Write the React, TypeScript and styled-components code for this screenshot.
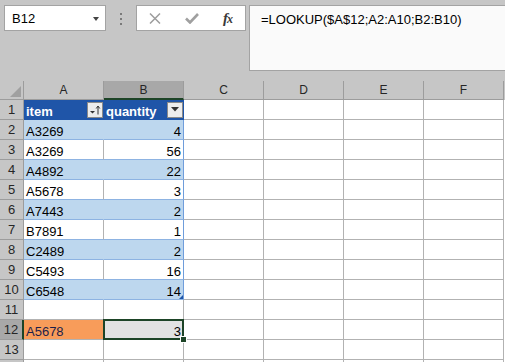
import React from 'react';
import styled, { createGlobalStyle, css } from 'styled-components';

const COLORS = {
  chrome: '#c6c6c6',
  frame: '#a3a3a3',
  headerLine: '#9c9c9c',
  headerText: '#262626',
  grid: '#b2b2b2',
  tableHead: '#1f55a8',
  tableBand: '#bdd7ee',
  tableLine: '#8db3e2',
  tableEdge: '#6f9ddb',
  selection: '#1d4427',
  selectedHeader: '#a8a8a8',
  orange: '#f89c5a',
};

const GlobalStyle = createGlobalStyle`
  html, body {
    margin: 0;
    overflow: hidden;
    background: #fff;
    font-family: "Liberation Sans", Arial, sans-serif;
    color: #000;
  }
`;

const Toolbar = styled.div`
  display: flex;
  align-items: flex-start;
  height: 81px;
  box-sizing: border-box;
  padding: 5px 0 0 4px;
  background: ${COLORS.chrome};
`;

const NameBox = styled.div`
  display: flex;
  align-items: center;
  justify-content: space-between;
  width: 102px;
  height: 26px;
  box-sizing: border-box;
  padding: 1px 6px 0 7px;
  border: 1px solid ${COLORS.frame};
  background: #fff;
  font-size: 13px;
`;

const DropArrow = styled.span`
  width: 0;
  height: 0;
  border-left: 3.5px solid transparent;
  border-right: 3.5px solid transparent;
  border-top: 4px solid #444;
`;

const Grip = styled.div`
  display: flex;
  flex-direction: column;
  gap: 3px;
  margin: 8px 14px 0;
  > i {
    width: 2px;
    height: 2px;
    background: #7a7a7a;
  }
`;

const FxBox = styled.div`
  display: flex;
  align-items: center;
  gap: 24px;
  width: 110px;
  height: 26px;
  box-sizing: border-box;
  padding: 0 0 0 12px;
  border: 1px solid ${COLORS.frame};
  background: #fff;
`;

const FxLabel = styled.span`
  font-family: "Liberation Serif", "DejaVu Serif", serif;
  font-style: italic;
  font-weight: bold;
  font-size: 15px;
  color: #3a3a3a;
  letter-spacing: -1px;
  > small {
    font-size: 12px;
  }
`;

const FormulaBar = styled.div`
  flex: 1;
  height: 66px;
  margin-left: 3px;
  box-sizing: border-box;
  padding: 6px 0 0 11px;
  border: 1px solid ${COLORS.frame};
  border-right: none;
  background: #fafafa;
  font-size: 13px;
  line-height: 15px;
`;

const Sheet = styled.div`
  display: grid;
  grid-template-columns: 24px repeat(6, 80px) 1fr;
  grid-template-rows: 19px;
  grid-auto-rows: 20px;
  font-size: 13px;
`;

const ColHeader = styled.div<{ $selected?: boolean }>`
  display: flex;
  align-items: center;
  justify-content: center;
  box-sizing: border-box;
  background: ${COLORS.chrome};
  border-right: 1px solid ${COLORS.headerLine};
  border-bottom: 1px solid ${COLORS.headerLine};
  color: ${COLORS.headerText};
  font-size: 12px;
  ${(p) =>
    p.$selected &&
    css`
      background: ${COLORS.selectedHeader};
      border-bottom: 2px solid ${COLORS.selection};
    `}
`;

const Corner = styled(ColHeader)`
  align-items: flex-end;
  justify-content: flex-end;
  padding: 0 2px 2px 0;
  &::after {
    content: '';
    width: 0;
    height: 0;
    border-left: 11px solid transparent;
    border-bottom: 11px solid #a0a0a0;
  }
`;

const Filler = styled.div<{ $chrome?: boolean }>`
  background: ${(p) => (p.$chrome ? COLORS.chrome : '#fff')};
`;

const RowHeader = styled.div<{ $selected?: boolean }>`
  display: flex;
  align-items: center;
  justify-content: center;
  box-sizing: border-box;
  background: ${COLORS.chrome};
  border-right: 1px solid ${COLORS.headerLine};
  border-bottom: 1px solid ${COLORS.headerLine};
  color: ${COLORS.headerText};
  ${(p) =>
    p.$selected &&
    css`
      background: ${COLORS.selectedHeader};
      border-right: 2px solid ${COLORS.selection};
    `}
`;

const Cell = styled.div<{
  $fill?: string;
  $vline?: string;
  $hline?: string;
  $right?: boolean;
  $bold?: boolean;
  $color?: string;
  $active?: boolean;
}>`
  position: relative;
  display: flex;
  align-items: flex-end;
  justify-content: ${(p) => (p.$right ? 'flex-end' : 'flex-start')};
  box-sizing: border-box;
  padding: 0 2px 0 2px;
  line-height: 14px;
  white-space: nowrap;
  background: ${(p) => p.$fill ?? '#fff'};
  border-right: 1px solid ${(p) => p.$vline ?? COLORS.grid};
  border-bottom: 1px solid ${(p) => p.$hline ?? COLORS.grid};
  color: ${(p) => p.$color ?? '#000'};
  font-weight: ${(p) => (p.$bold ? 'bold' : 'normal')};
  ${(p) =>
    p.$active &&
    css`
      z-index: 1;
      &::after {
        content: '';
        position: absolute;
        inset: -1px;
        border: 2px solid ${COLORS.selection};
      }
    `}
`;

const TableHeadCell = styled(Cell)`
  padding-right: 0;
`;

const FilterButton = styled.span`
  display: flex;
  align-items: center;
  justify-content: center;
  align-self: center;
  width: 16px;
  height: 16px;
  margin-left: auto;
  box-sizing: border-box;
  border: 1px solid #8a8a8a;
  background: #ededed;
`;

const FillHandle = styled.span`
  position: absolute;
  right: -4px;
  bottom: -4px;
  z-index: 2;
  width: 5px;
  height: 5px;
  border: 1px solid #fff;
  background: ${COLORS.selection};
`;

const ResizeMark = styled.span`
  position: absolute;
  right: 0;
  bottom: 0;
  width: 0;
  height: 0;
  border-left: 4px solid transparent;
  border-bottom: 4px solid ${COLORS.tableHead};
`;

const COLUMNS = ['A', 'B', 'C', 'D', 'E', 'F'];

const DATA: [string, number][] = [
  ['A3269', 4],
  ['A3269', 56],
  ['A4892', 22],
  ['A5678', 3],
  ['A7443', 2],
  ['B7891', 1],
  ['C2489', 2],
  ['C5493', 16],
  ['C6548', 14],
];

function SortFilterIcon() {
  return (
    <svg width="12" height="12" viewBox="0 0 12 12">
      <path d="M1 7h5l-2.5 2.5z" fill="#333" />
      <path d="M9 2.5v8" stroke="#333" strokeWidth="1" />
      <path d="M7.2 4.5L9 2l1.8 2.5" fill="none" stroke="#333" strokeWidth="1" />
    </svg>
  );
}

function FilterIcon() {
  return (
    <svg width="8" height="5" viewBox="0 0 8 5">
      <path d="M0 0h8L4 4.5z" fill="#333" />
    </svg>
  );
}

function EmptyCells() {
  return (
    <>
      {COLUMNS.slice(2).map((c) => (
        <Cell key={c} />
      ))}
      <Filler />
    </>
  );
}

export default function App() {
  const rows: React.ReactNode[] = [];

  rows.push(
    <React.Fragment key="r1">
      <RowHeader>1</RowHeader>
      <TableHeadCell $fill={COLORS.tableHead} $vline={COLORS.tableHead} $hline={COLORS.tableHead} $color="#fff" $bold>
        item
        <FilterButton>
          <SortFilterIcon />
        </FilterButton>
      </TableHeadCell>
      <TableHeadCell $fill={COLORS.tableHead} $vline={COLORS.tableHead} $hline={COLORS.tableHead} $color="#fff" $bold>
        quantity
        <FilterButton>
          <FilterIcon />
        </FilterButton>
      </TableHeadCell>
      <EmptyCells />
    </React.Fragment>
  );

  DATA.forEach(([item, qty], i) => {
    const band = i % 2 === 0;
    const fill = band ? COLORS.tableBand : '#fff';
    const last = i === DATA.length - 1;
    rows.push(
      <React.Fragment key={`r${i + 2}`}>
        <RowHeader>{i + 2}</RowHeader>
        <Cell $fill={fill} $vline={band ? COLORS.tableBand : COLORS.grid} $hline={COLORS.tableLine}>
          {item}
        </Cell>
        <Cell $fill={fill} $vline={COLORS.tableEdge} $hline={COLORS.tableLine} $right>
          {qty}
          {last && <ResizeMark />}
        </Cell>
        <EmptyCells />
      </React.Fragment>
    );
  });

  rows.push(
    <React.Fragment key="r11">
      <RowHeader>11</RowHeader>
      <Cell />
      <Cell />
      <EmptyCells />
    </React.Fragment>
  );

  rows.push(
    <React.Fragment key="r12">
      <RowHeader $selected>12</RowHeader>
      <Cell $fill={COLORS.orange} $vline={COLORS.orange} $color="#1c1f4a">
        A5678
      </Cell>
      <Cell $fill="#e2e2e2" $right $active>
        3
        <FillHandle />
      </Cell>
      <EmptyCells />
    </React.Fragment>
  );

  rows.push(
    <React.Fragment key="r13">
      <RowHeader>13</RowHeader>
      <Cell />
      <Cell />
      <EmptyCells />
    </React.Fragment>
  );

  // row 14 only peeks in by a couple of pixels, so its number stays off-screen
  rows.push(
    <React.Fragment key="r14">
      <RowHeader />
      <Cell />
      <Cell />
      <EmptyCells />
    </React.Fragment>
  );

  return (
    <>
      <GlobalStyle />
      <Toolbar>
        <NameBox>
          B12
          <DropArrow />
        </NameBox>
        <Grip>
          <i />
          <i />
          <i />
        </Grip>
        <FxBox>
          <svg width="12" height="11" viewBox="0 0 12 11">
            <path d="M1 0.5L11 10.5M11 0.5L1 10.5" stroke="#9d9d9d" strokeWidth="1.5" />
          </svg>
          <svg width="14" height="11" viewBox="0 0 14 11">
            <path d="M1 5.5L5 9.5L13 1" fill="none" stroke="#a0a0a0" strokeWidth="2.6" />
          </svg>
          <FxLabel>
            f<small>x</small>
          </FxLabel>
        </FxBox>
        <FormulaBar>=LOOKUP($A$12;A2:A10;B2:B10)</FormulaBar>
      </Toolbar>
      <Sheet>
        <Corner />
        {COLUMNS.map((c) => (
          <ColHeader key={c} $selected={c === 'B'}>
            {c}
          </ColHeader>
        ))}
        <Filler $chrome />
        {rows}
      </Sheet>
    </>
  );
}
